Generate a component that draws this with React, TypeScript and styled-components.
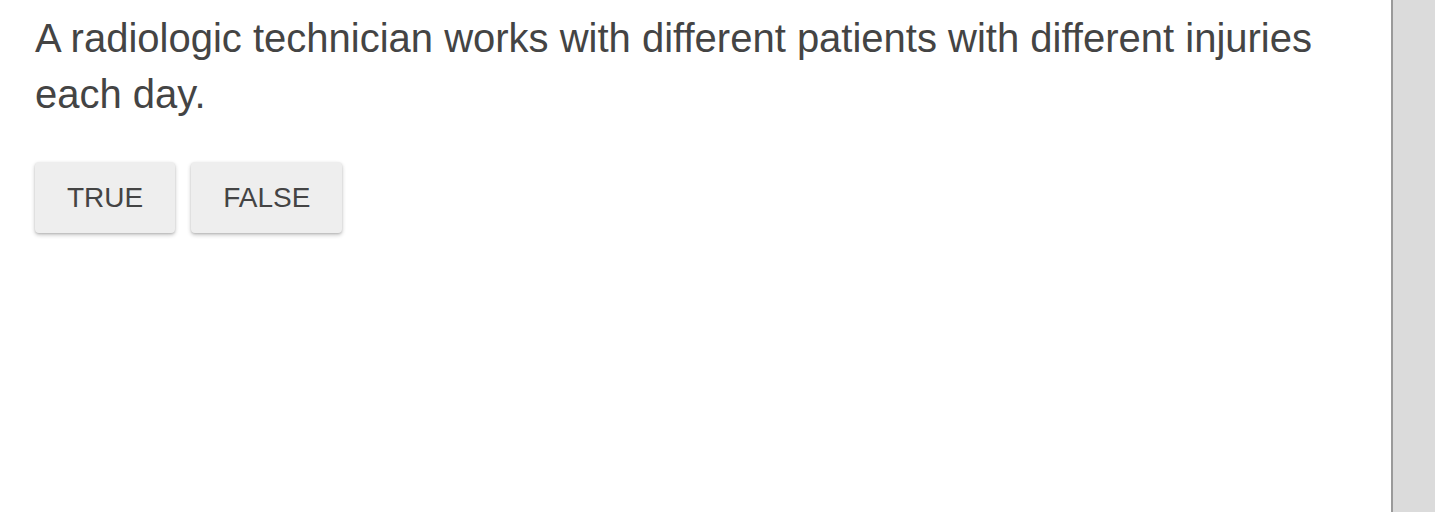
import React from 'react'
import styled, { createGlobalStyle } from 'styled-components'

const GlobalStyle = createGlobalStyle`
  html, body {
    margin: 0;
    padding: 0;
    background: #fff;
  }
`

const Layout = styled.div`
  display: flex;
  height: 512px;
  overflow: hidden;
  font-family: 'Liberation Sans', Arial, sans-serif;
`

const Content = styled.main`
  flex: 1;
  padding: 10px 35px 0;
`

const SidePanel = styled.aside`
  width: 42px;
  border-left: 2px solid #9a9a9a;
  background: #dbdbdb;
`

const Question = styled.p`
  margin: 0;
  font-size: 40px;
  line-height: 56px;
  color: #444;
`

const Answers = styled.div`
  display: flex;
  gap: 16px;
  margin-top: 40px;
`

const AnswerButton = styled.button`
  height: 71px;
  padding: 0 32px;
  border: none;
  border-radius: 4px;
  background: #eeeeee;
  color: #444;
  font-family: inherit;
  font-size: 28px;
  text-transform: uppercase;
  box-shadow: 0 2px 4px rgba(0, 0, 0, 0.22), 0 1px 2px rgba(0, 0, 0, 0.12);
  cursor: pointer;
`

const ANSWERS = ['True', 'False']

const App = () => (
  <>
    <GlobalStyle />
    <Layout>
      <Content>
        <Question>
          A radiologic technician works with different patients with different
          injuries each day.
        </Question>
        <Answers>
          {ANSWERS.map((label) => (
            <AnswerButton key={label}>{label}</AnswerButton>
          ))}
        </Answers>
      </Content>
      <SidePanel />
    </Layout>
  </>
)

export default App
